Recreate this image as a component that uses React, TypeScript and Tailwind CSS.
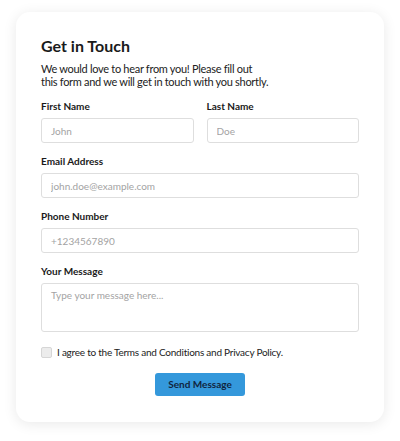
import React, { useState } from 'react';

function Field({ label, placeholder }: { label: string; placeholder: string }) {
  return (
    <div className="flex flex-col">
      <label className="text-[10px] leading-[14px] font-bold text-[#1a1a1a]">{label}</label>
      <input
        placeholder={placeholder}
        className="mt-[5px] h-[25px] w-full rounded-[3px] border border-[#dedede] bg-white px-[9px] text-[10px] text-[#333] placeholder:text-[#a3a3a3] outline-none"
      />
    </div>
  );
}

export default function App() {
  const [agree, setAgree] = useState(false);

  return (
    <div className="min-h-[441px] w-[400px] bg-white pt-[12px] font-['Lato',sans-serif]">
      <div className="mx-[16px] h-[410px] rounded-[14px] bg-white px-[25px] pt-[24px] shadow-[0_2px_14px_rgba(0,0,0,0.09)]">
        {/* Header */}
        <h1 className="text-[16px] leading-[20px] font-bold text-[#1a1a1a]">Get in Touch</h1>
        <p className="mt-[6px] whitespace-nowrap text-[11px] leading-[13px] tracking-[-0.3px] text-[#222]">
          We would love to hear from you! Please fill out
          <br />
          this form and we will get in touch with you shortly.
        </p>

        {/* Name row */}
        <div className="mt-[11px] grid grid-cols-2 gap-[13px]">
          <Field label="First Name" placeholder="John" />
          <Field label="Last Name" placeholder="Doe" />
        </div>

        <div className="mt-[11px]">
          <Field label="Email Address" placeholder="john.doe@example.com" />
        </div>
        <div className="mt-[11px]">
          <Field label="Phone Number" placeholder="+1234567890" />
        </div>

        <div className="mt-[11px] flex flex-col">
          <label className="text-[10px] leading-[14px] font-bold text-[#1a1a1a]">Your Message</label>
          <textarea
            placeholder="Type your message here..."
            className="mt-[5px] h-[49px] w-full resize-none rounded-[3px] border border-[#dedede] bg-white px-[9px] py-[4px] text-[10px] leading-[14px] text-[#333] placeholder:text-[#a3a3a3] outline-none"
          />
        </div>

        {/* Terms */}
        <label className="mt-[14px] flex items-center gap-[5px]">
          <input
            type="checkbox"
            checked={agree}
            onChange={e => setAgree(e.target.checked)}
            className="h-[11px] w-[11px] appearance-none rounded-[2px] border border-[#d6d6d6] bg-[#ececec]"
          />
          <span className="text-[10px] leading-[12px] tracking-[-0.24px] text-[#222]">
            I agree to the Terms and Conditions and Privacy Policy.
          </span>
        </label>

        <div className="mt-[15px] flex justify-center">
          <button className="h-[23px] w-[90px] rounded-[3px] bg-[#3498db] text-[10px] font-bold text-[#10253f]">
            Send Message
          </button>
        </div>
      </div>
    </div>
  );
}
